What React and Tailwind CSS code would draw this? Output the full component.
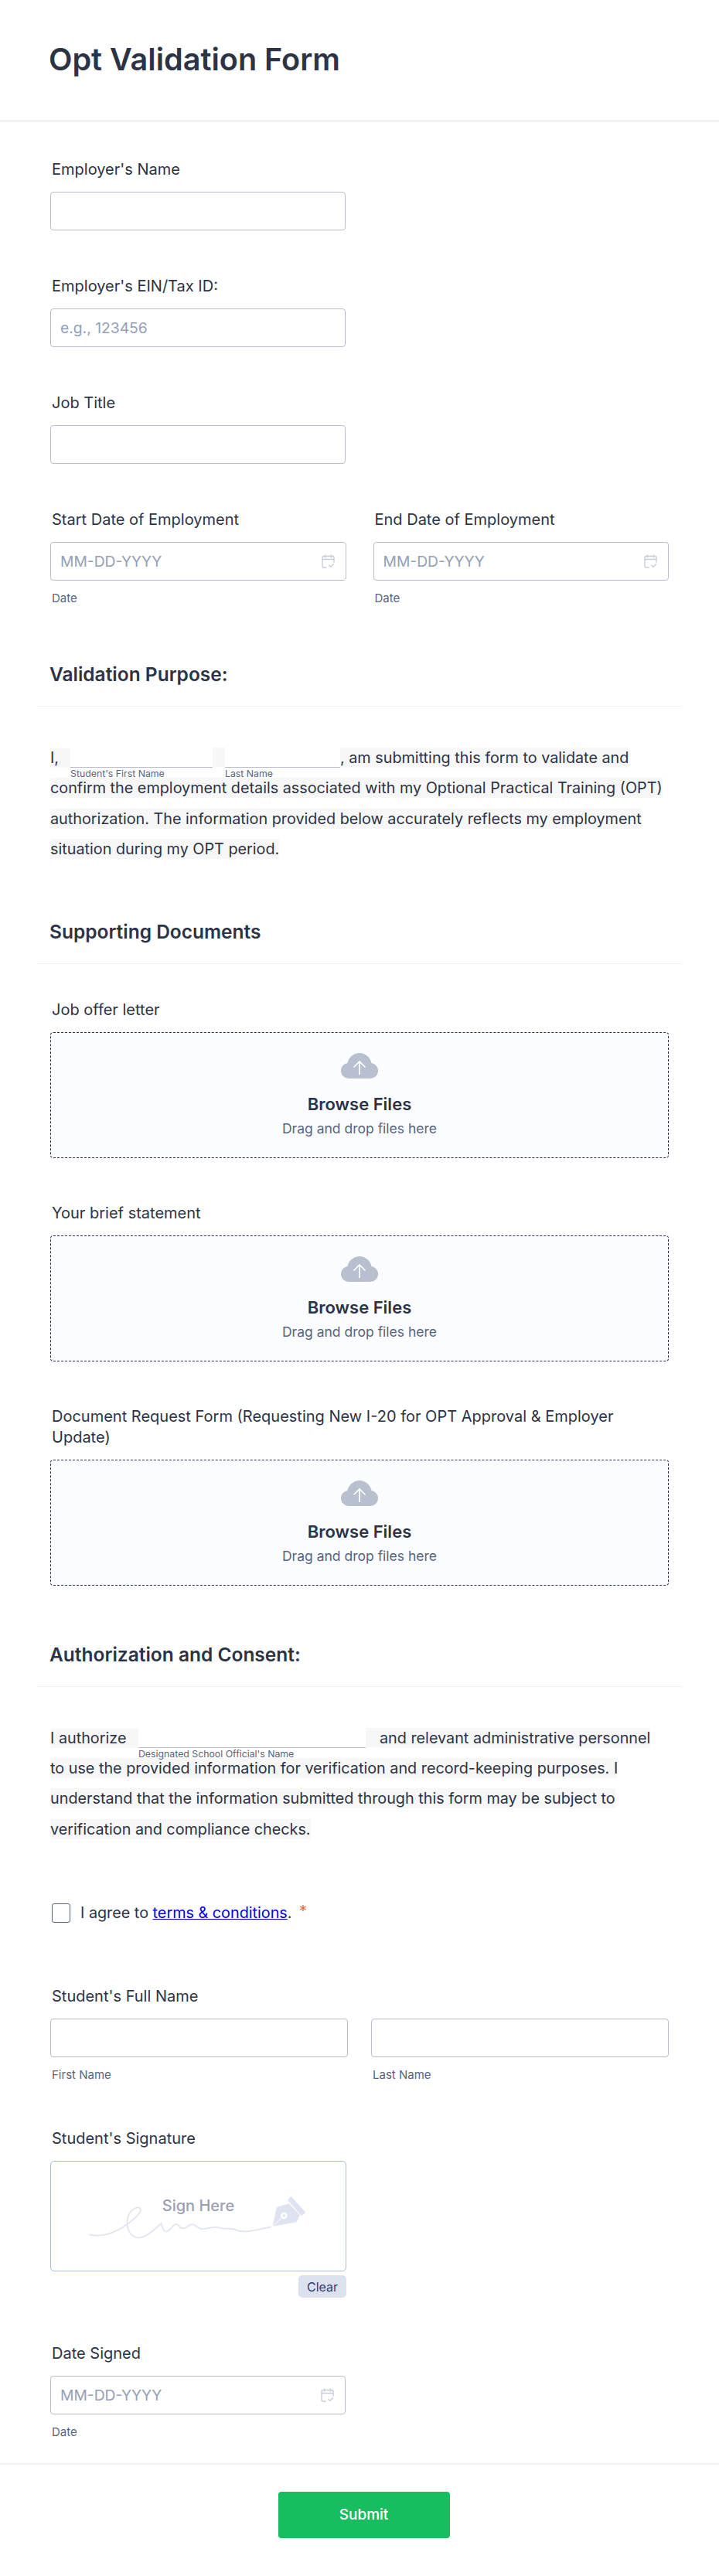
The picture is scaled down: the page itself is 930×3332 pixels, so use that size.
import React from 'react';

const font = { fontFamily: 'Inter, "Liberation Sans", sans-serif' };

const CalendarIcon = () => (
  <svg width="17" height="18" viewBox="0 0 17 18" fill="none" stroke="#c8ccd8" strokeWidth="1.4" strokeLinecap="round" strokeLinejoin="round">
    <path d="M4.500 1v3M12.500 1v3M1 6.500h15M16 10V4a1.500 1.500 0 0 0-1.500-1.500h-12A1.500 1.500 0 0 0 1 4v11.500A1.500 1.500 0 0 0 2.500 17H6" />
    <path d="M10 14.500l1.800 1.800 3.500-3.500" />
  </svg>
);

const CloudIcon = () => (
  <svg width="48" height="33" viewBox="0 0 48 33">
    <path d="M10 33a10 10 0 0 1-1.500-19.900C10 5.500 16.500 0 24 0s14 5.500 15.500 13.100A10 10 0 0 1 38 33z" fill="#b8c0d0" />
    <path d="M24 28V11M16.500 18.500 24 11l7.500 7.500" fill="none" stroke="#fff" strokeWidth="1.600" />
  </svg>
);

const SignatureArt = () => (
  <svg className="absolute left-[36px] top-[35px]" width="300" height="100" viewBox="0 0 900 300" fill="none">
    <path
      d="M42 178C80 190 130 175 170 150C195 135 240 100 240 80C235 65 205 75 192 105C180 140 190 180 225 190C260 195 300 150 320 135C325 160 335 170 345 165C365 150 370 130 385 140C395 155 405 160 425 145C440 130 455 145 470 155C495 160 520 145 540 150C565 160 585 150 610 160C640 175 690 160 745 148"
      stroke="#dfe3f1"
      strokeWidth="5"
      strokeLinecap="round"
    />
    <path d="M752 146L767 72L815 58L858 102L845 130Z" fill="#dfe3f1" />
    <path d="M810 44L824 30L880 92L864 106Z" fill="#dfe3f1" />
    <path d="M756 144L786 114" stroke="#fff" strokeWidth="3" />
    <circle cx="796" cy="105" r="13" fill="#fff" />
    <circle cx="796" cy="105" r="5" fill="#dfe3f1" />
  </svg>
);

const Label = ({ children }) => (
  <label className="block pl-[2px] text-[20px] leading-[27px] text-[#2c3345]">{children}</label>
);

const SubLabel = ({ children }) => (
  <div className="pl-[2px] mt-[14px] text-[15px] leading-[18px] text-[#57647e]">{children}</div>
);

const TextBox = ({ placeholder, icon, className = 'w-[382px]' }) => (
  <div className={`${className} h-[50px] mt-[15px] flex items-center justify-between pl-[12px] pr-[14px] bg-white border border-[#b8bdc9] rounded-[4px] text-[19.300px] text-[#94a0b6]`}>
    <span>{placeholder}</span>
    {icon && <CalendarIcon />}
  </div>
);

const DateField = ({ label, className }) => (
  <div className={className}>
    <Label>{label}</Label>
    <TextBox placeholder="MM-DD-YYYY" icon className="w-full" />
    <SubLabel>Date</SubLabel>
  </div>
);

const SectionHead = ({ children }) => (
  <div className="mx-[47px] border-b border-[#f0f1f5] pl-[17px] pb-[26px]">
    <h2 className="text-[24.500px] leading-[30px] font-semibold text-[#2c3345]">{children}</h2>
  </div>
);

const Upload = ({ label }) => (
  <div>
    <Label>{label}</Label>
    <div className="mt-[15px] h-[163px] flex flex-col items-center pt-[26px] bg-[#fbfcff] border border-dashed border-[#2c3345] rounded-[4px]">
      <CloudIcon />
      <div className="mt-[19px] text-[22px] leading-[28px] font-semibold text-[#2c3345]">Browse Files</div>
      <div className="mt-[6px] text-[17.500px] leading-[24px] text-[#57647e]">Drag and drop files here</div>
    </div>
  </div>
);

const Hl = ({ children }) => <span className="bg-[#f7f7f7] py-[1px]">{children}</span>;

const InlineInput = ({ label, width }) => (
  <span className={`relative inline-block h-[25px] align-[-6px] border-b border-[#b8bdc9] ${width}`}>
    <span className="absolute left-0 top-[25px] whitespace-nowrap text-[12.300px] leading-[16px] text-[#57647e]">{label}</span>
  </span>
);

export default function App() {
  return (
    <div className="w-[930px] h-[3332px] bg-white overflow-hidden" style={font}>
      <header className="h-[157px] border-b border-[#d8dae0] pl-[63px] pt-[49px]">
        <h1 className="text-[39.600px] leading-[56px] font-semibold text-[#2c3345]">Opt Validation Form</h1>
      </header>

      <div className="px-[65px] pt-[49px]">
        <Label>Employer's Name</Label>
        <TextBox />
        <div className="mt-[59px]"><Label>Employer's EIN/Tax ID:</Label></div>
        <TextBox placeholder="e.g., 123456" />
        <div className="mt-[59px]"><Label>Job Title</Label></div>
        <TextBox />
        <div className="mt-[59px] grid grid-cols-2 gap-[35px]">
          <DateField label="Start Date of Employment" />
          <DateField label="End Date of Employment" />
        </div>
      </div>

      <div className="mt-[74px]"><SectionHead>Validation Purpose:</SectionHead></div>

      <p className="mx-[65px] mt-[47px] text-[19.800px] leading-[39.400px] text-[#2c3345]">
        <span className="inline-block w-[26px] bg-[#f7f7f7] leading-[25px]">I,</span>
        <InlineInput label="Student's First Name" width="w-[184px]" />
        <span className="inline-block w-[16px] h-[25px] bg-[#f7f7f7] align-[-5px]" />
        <InlineInput label="Last Name" width="w-[149px]" />
        <Hl>, am submitting this form to validate and confirm the employment details associated with my Optional Practical Training (OPT) authorization. The information provided below accurately reflects my employment situation during my OPT period.</Hl>
      </p>

      <div className="mt-[71px]"><SectionHead>Supporting Documents</SectionHead></div>

      <div className="px-[65px] pt-[46px] flex flex-col gap-[58px]">
        <Upload label="Job offer letter" />
        <Upload label="Your brief statement" />
        <Upload label="Document Request Form (Requesting New I-20 for OPT Approval & Employer Update)" />
      </div>

      <div className="mt-[74px]"><SectionHead>Authorization and Consent:</SectionHead></div>

      <p className="mx-[65px] mt-[47px] text-[19.800px] leading-[39.400px] text-[#2c3345]">
        <span className="inline-block w-[114px] bg-[#f7f7f7] leading-[25px]">I authorize</span>
        <InlineInput label="Designated School Official's Name" width="w-[294px]" />
        <span className="inline-block w-[18px] h-[25px] bg-[#f7f7f7] align-[-5px]" />
        <Hl>and relevant administrative personnel<br />to use the provided information for verification and record-keeping purposes. I understand that the information submitted through this form may be subject to verification and compliance checks.</Hl>
      </p>

      <div className="px-[65px] mt-[76px] flex items-center gap-[13px] text-[19.800px] leading-[25px] text-[#2c3345]">
        <span className="ml-[2px] w-[24px] h-[25px] border border-[#57647e] rounded-[3px]" />
        <span>
          I agree to <a className="text-[#0000ee] underline">terms &amp; conditions</a>. <span className="ml-[4px] text-[#d9773f] text-[20px] leading-[20px] align-top">*</span>
        </span>
      </div>

      <div className="px-[65px] mt-[82px]">
        <Label>Student's Full Name</Label>
        <div className="grid grid-cols-2 gap-[30px]">
          <div>
            <TextBox className="w-full" />
            <SubLabel>First Name</SubLabel>
          </div>
          <div>
            <TextBox className="w-full" />
            <SubLabel>Last Name</SubLabel>
          </div>
        </div>

        <div className="mt-[60px]"><Label>Student's Signature</Label></div>
        <div className="relative w-[383px] h-[143px] mt-[15px] bg-white border border-[#a9bce6] rounded-[5px]">
          <SignatureArt />
          <div className="absolute left-0 right-0 top-[43px] text-center text-[20px] leading-[28px] font-medium text-[#9a9fb5]">Sign Here</div>
        </div>
        <div className="w-[383px] mt-[5px] flex justify-end">
          <button className="w-[62px] h-[29px] bg-[#dce1f0] rounded-[5px] text-[16px] text-[#2c3e6b]">Clear</button>
        </div>

        <div className="mt-[59px]"><Label>Date Signed</Label></div>
        <TextBox placeholder="MM-DD-YYYY" icon />
        <SubLabel>Date</SubLabel>
      </div>

      <footer className="mt-[31px] border-t-2 border-[#f0f1f5] pt-[35px] flex justify-center">
        <button className="w-[222px] h-[60px] ml-[11px] bg-[#18bd5f] rounded-[4px] text-[19px] font-medium text-white">Submit</button>
      </footer>
    </div>
  );
}
